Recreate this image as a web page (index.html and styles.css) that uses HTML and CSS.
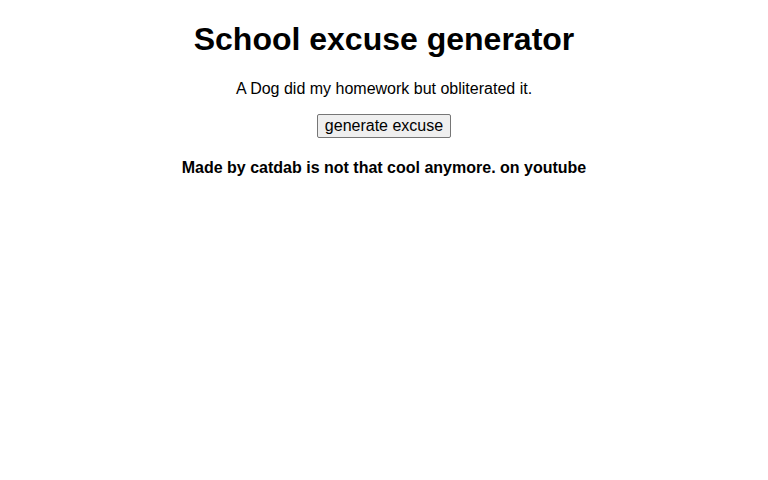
FILE: index.html
```html
<!DOCTYPE html>
<html lang="en">
<head>
    <meta charset="UTF-8">
    <meta name="viewport" content="width=device-width, initial-scale=1.0">
    <title>School excuse generator</title>
    <link rel="stylesheet" href="styles.css">
</head>
<body>
    <div class="container">
        <h1>School excuse generator</h1>

        <p id="excuse">A Dog did my homework but obliterated it.</p>

        <div class="controls">
            <button id="generateBtn">generate excuse</button>
        </div>

        <h4 class="credit">Made by catdab is not that cool anymore. on youtube</h4>
    </div>
</body>
</html>
```

FILE: styles.css
```css
body {
    font-family: "Liberation Sans", Arial, sans-serif;
    margin: 0;
    background: white;
    color: black;
}
.container {
    text-align: center;
}
h1 {
    font-size: 32px;
    margin: 21.44px 0;
}
p {
    font-size: 16px;
    margin: 16px 0;
}
button {
    font-family: "Liberation Sans", Arial, sans-serif;
    font-size: 16px;
    padding: 2px 7px;
    background: #efefef;
    color: black;
    border: 1px solid #767676;
    border-radius: 2px;
}
.credit {
    font-size: 16px;
    margin: 21.28px 0;
}
```
